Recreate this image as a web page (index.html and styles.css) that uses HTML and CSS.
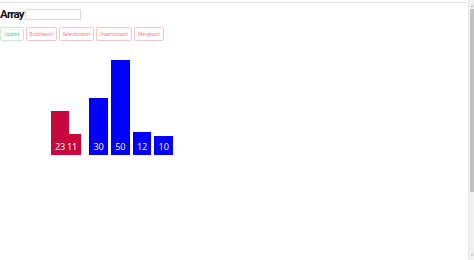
FILE: index.html
```html
<!DOCTYPE html>
<html lang="en">
<head>
<meta charset="utf-8">
<title>Sorting Visualizer</title>
<link rel="stylesheet" href="styles.css">
</head>
<body>
<div class="topline"></div>
<main class="app">
  <div class="head">
    <h1 class="title">Array</h1>
    <input class="arr-input" type="text">
  </div>
  <div class="controls">
    <button class="btn btn-success">Update</button>
    <button class="btn btn-danger">Bubblesort</button>
    <button class="btn btn-danger">Selectionsort</button>
    <button class="btn btn-danger">Insertionsort</button>
    <button class="btn btn-danger">Mergesort</button>
  </div>
  <div class="chart">
    <div class="bar bar-active" style="height:43.5px;left:4.8px"><span class="label">23</span></div>
    <div class="bar bar-active" style="height:20.8px;left:-4.9px"><span class="label">11</span></div>
    <div class="bar" style="height:56.7px"><span class="label">30</span></div>
    <div class="bar" style="height:94.5px"><span class="label">50</span></div>
    <div class="bar" style="height:22.7px"><span class="label">12</span></div>
    <div class="bar" style="height:18.9px"><span class="label">10</span></div>
  </div>
</main>
<div class="scrollbar">
  <span class="sb-arrow sb-up"></span>
  <div class="sb-thumb"></div>
  <span class="sb-arrow sb-down"></span>
</div>
</body>
</html>
```
FILE: styles.css
```css
html, body {
  margin: 0;
  padding: 0;
  background: #ffffff;
  overflow: hidden;
}
body {
  font-family: "Noto Sans", "Open Sans", sans-serif;
  color: #212529;
  width: 474px;
  height: 260px;
}
.topline {
  width: 468px;
  height: 2px;
  border-bottom: 1px solid #e4e4e4;
}
.app {
  display: flex;
  flex-direction: column;
}
.head {
  display: flex;
  align-items: center;
  gap: 1px;
  margin-top: 5px;
  height: 12px;
}
.title {
  margin: 0;
  font-family: Roboto, "Noto Sans", sans-serif;
  font-size: 11.5px;
  font-weight: 700;
  letter-spacing: -0.8px;
  line-height: 12px;
  color: #111;
  white-space: nowrap;
}
.arr-input {
  box-sizing: border-box;
  width: 56px;
  height: 11px;
  margin: 0;
  padding: 0;
  border: 1px solid #dcdcdc;
  border-radius: 1px;
  background: #fff;
}
.controls {
  display: flex;
  gap: 2px;
  margin-top: 7px;
}
.btn {
  box-sizing: border-box;
  height: 14px;
  margin: 0;
  padding: 0 3px;
  font-family: "Noto Sans", "Open Sans", sans-serif;
  font-size: 4.5px;
  line-height: 12px;
  background: #fff;
  border-radius: 2px;
  cursor: pointer;
}
.btn-success {
  color: #6cbd7d;
  border: 1px solid #cde8d2;
}
.btn-danger {
  color: #e37a86;
  border: 1px solid #f2c6cb;
}
.chart {
  display: flex;
  align-items: flex-end;
  gap: 3px;
  height: 100px;
  margin-top: 13.5px;
  padding-left: 45.9px;
}
.bar {
  flex: 0 0 18.7px;
  display: flex;
  flex-direction: column;
  justify-content: flex-end;
  align-items: center;
  background: #0000ff;
  position: relative;
}
.bar-active {
  background: #c8073c;
}
.label {
  position: relative;
  z-index: 1;
  color: #ffffff;
  font-family: "Open Sans", "Noto Sans", sans-serif;
  font-size: 9.2px;
  line-height: 9px;
  padding-bottom: 4px;
  letter-spacing: -0.2px;
}
.scrollbar {
  position: fixed;
  top: 0;
  right: 0;
  width: 6px;
  height: 260px;
  background: #f1f1f1;
  border-left: 1px solid #e8e8e8;
  box-sizing: border-box;
}
.sb-thumb {
  position: absolute;
  left: 1px;
  width: 4px;
  top: 9px;
  height: 183px;
  background: #c1c1c1;
}
.sb-arrow {
  position: absolute;
  left: 1.5px;
  width: 0;
  height: 0;
  border-left: 1.5px solid transparent;
  border-right: 1.5px solid transparent;
}
.sb-up {
  top: 5px;
  border-bottom: 2px solid #a3a3a3;
}
.sb-down {
  bottom: 4px;
  border-top: 2px solid #a3a3a3;
}
```
